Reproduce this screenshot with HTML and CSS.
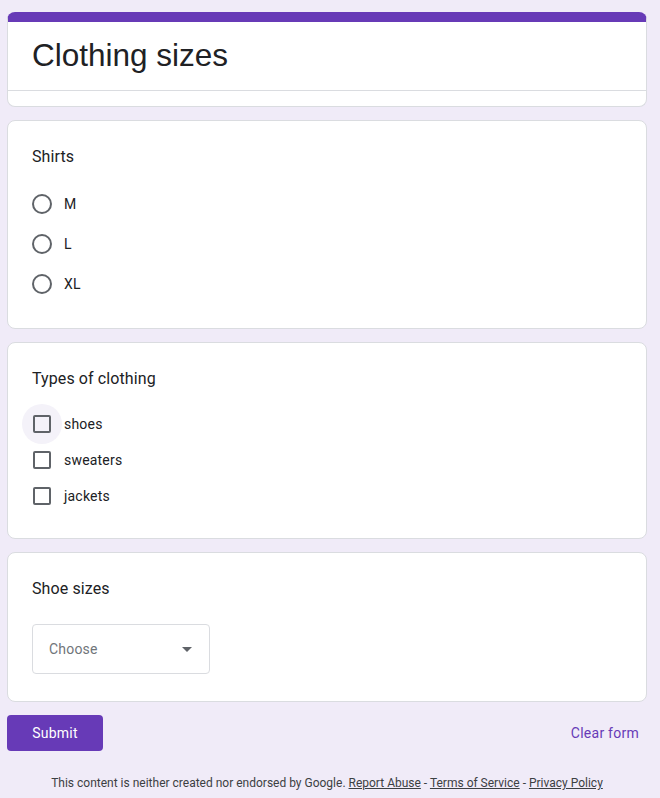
FILE: index.html
```html
<!DOCTYPE html>
<html lang="en">
  <head>
    <meta charset="UTF-8" />
    <meta name="viewport" content="width=device-width, initial-scale=1.0" />
    <title>Clothing sizes</title>
    <link rel="stylesheet" href="styles.css">
  </head>
  <body>
    <div class="form">
      <div class="card header-card">
        <h1 class="form-title">Clothing sizes</h1>
        <div class="header-divider"></div>
        <div class="header-spacer"></div>
      </div>

      <div class="card question">
        <div class="question-title">Shirts</div>
        <div class="options">
          <label class="option radio-option"><span class="radio"></span><span class="option-label">M</span></label>
          <label class="option radio-option"><span class="radio"></span><span class="option-label">L</span></label>
          <label class="option radio-option"><span class="radio"></span><span class="option-label">XL</span></label>
        </div>
      </div>

      <div class="card question">
        <div class="question-title">Types of clothing</div>
        <div class="options">
          <label class="option check-option hovered"><span class="checkbox"></span><span class="option-label">shoes</span></label>
          <label class="option check-option"><span class="checkbox"></span><span class="option-label">sweaters</span></label>
          <label class="option check-option"><span class="checkbox"></span><span class="option-label">jackets</span></label>
        </div>
      </div>

      <div class="card question dropdown-question">
        <div class="question-title">Shoe sizes</div>
        <div class="dropdown">
          <span class="dropdown-text">Choose</span>
          <span class="dropdown-arrow"></span>
        </div>
      </div>

      <div class="actions">
        <button class="btn-submit">Submit</button>
        <button class="btn-clear">Clear form</button>
      </div>

      <p class="footer">
        This content is neither created nor endorsed by Google.
        <a href="#">Report Abuse</a> - <a href="#">Terms of Service</a> - <a href="#">Privacy Policy</a>
      </p>
    </div>
  </body>
</html>
```

FILE: styles.css
```css
body {
  margin: 0;
  padding: 0;
  background-color: #f0ebf8;
  font-family: Roboto, "Liberation Sans", Arial, sans-serif;
  color: #202124;
}

.form {
  width: 640px;
  margin: 12px 0 0 7px;
}

.card {
  background-color: white;
  border: 1px solid #dadce0;
  border-radius: 8px;
  margin-bottom: 13px;
}

.header-card {
  border-top: 10px solid #673ab7;
  margin-top: 0;
}

.form-title {
  font-family: "Liberation Sans", Arial, sans-serif;
  font-size: 31.5px;
  font-weight: normal;
  line-height: 40px;
  margin: 0;
  padding: 13px 24px 0;
}

.header-divider {
  border-bottom: 1px solid #dadce0;
  margin-top: 15px;
}

.header-spacer {
  height: 15px;
}

.question {
  padding: 24px;
}

.question-title {
  font-size: 16px;
  line-height: 24px;
  letter-spacing: 0.1px;
}

.options {
  margin-top: 15px;
}

.option {
  display: flex;
  align-items: center;
  cursor: pointer;
}

.radio-option {
  height: 40px;
}

.check-option {
  height: 36px;
}

.option-label {
  font-size: 14px;
  letter-spacing: 0.2px;
  margin-left: 12px;
}

.radio {
  width: 16px;
  height: 16px;
  border: 2px solid #5f6368;
  border-radius: 50%;
}

.checkbox {
  position: relative;
  width: 14px;
  height: 14px;
  border: 2px solid #5f6368;
  border-radius: 2px;
  margin-left: 1px;
  margin-right: 1px;
}

.hovered {
  position: relative;
  z-index: 0;
}

.hovered .checkbox::before {
  content: "";
  position: absolute;
  left: -13px;
  top: -13px;
  width: 40px;
  height: 40px;
  border-radius: 50%;
  background-color: #f4f2f9;
  z-index: -1;
}

.dropdown-question {
  padding-bottom: 27px;
}

.dropdown {
  display: flex;
  align-items: center;
  justify-content: space-between;
  width: 143px;
  height: 48px;
  margin-top: 23px;
  padding: 0 17px 0 16px;
  border: 1px solid #dadce0;
  border-radius: 4px;
}

.dropdown-text {
  font-size: 14px;
  color: #70757a;
  letter-spacing: 0.2px;
}

.dropdown-arrow {
  width: 0;
  height: 0;
  border-left: 5px solid transparent;
  border-right: 5px solid transparent;
  border-top: 5px solid #5f6368;
}

.actions {
  display: flex;
  justify-content: space-between;
  align-items: center;
}

.btn-submit {
  width: 96px;
  height: 36px;
  background-color: #673ab7;
  color: white;
  border: none;
  border-radius: 4px;
  font-family: Roboto, sans-serif;
  font-size: 14px;
  font-weight: 400;
  letter-spacing: 0.25px;
  cursor: pointer;
}

.btn-clear {
  height: 36px;
  padding: 0 8px;
  background: transparent;
  border: none;
  color: #673ab7;
  font-family: Roboto, sans-serif;
  font-size: 14px;
  font-weight: 400;
  letter-spacing: 0.25px;
  cursor: pointer;
}

.footer {
  text-align: center;
  font-size: 12px;
  color: #3c4043;
  margin: 25px 0 0;
}

.footer a {
  color: #3c4043;
}
```
